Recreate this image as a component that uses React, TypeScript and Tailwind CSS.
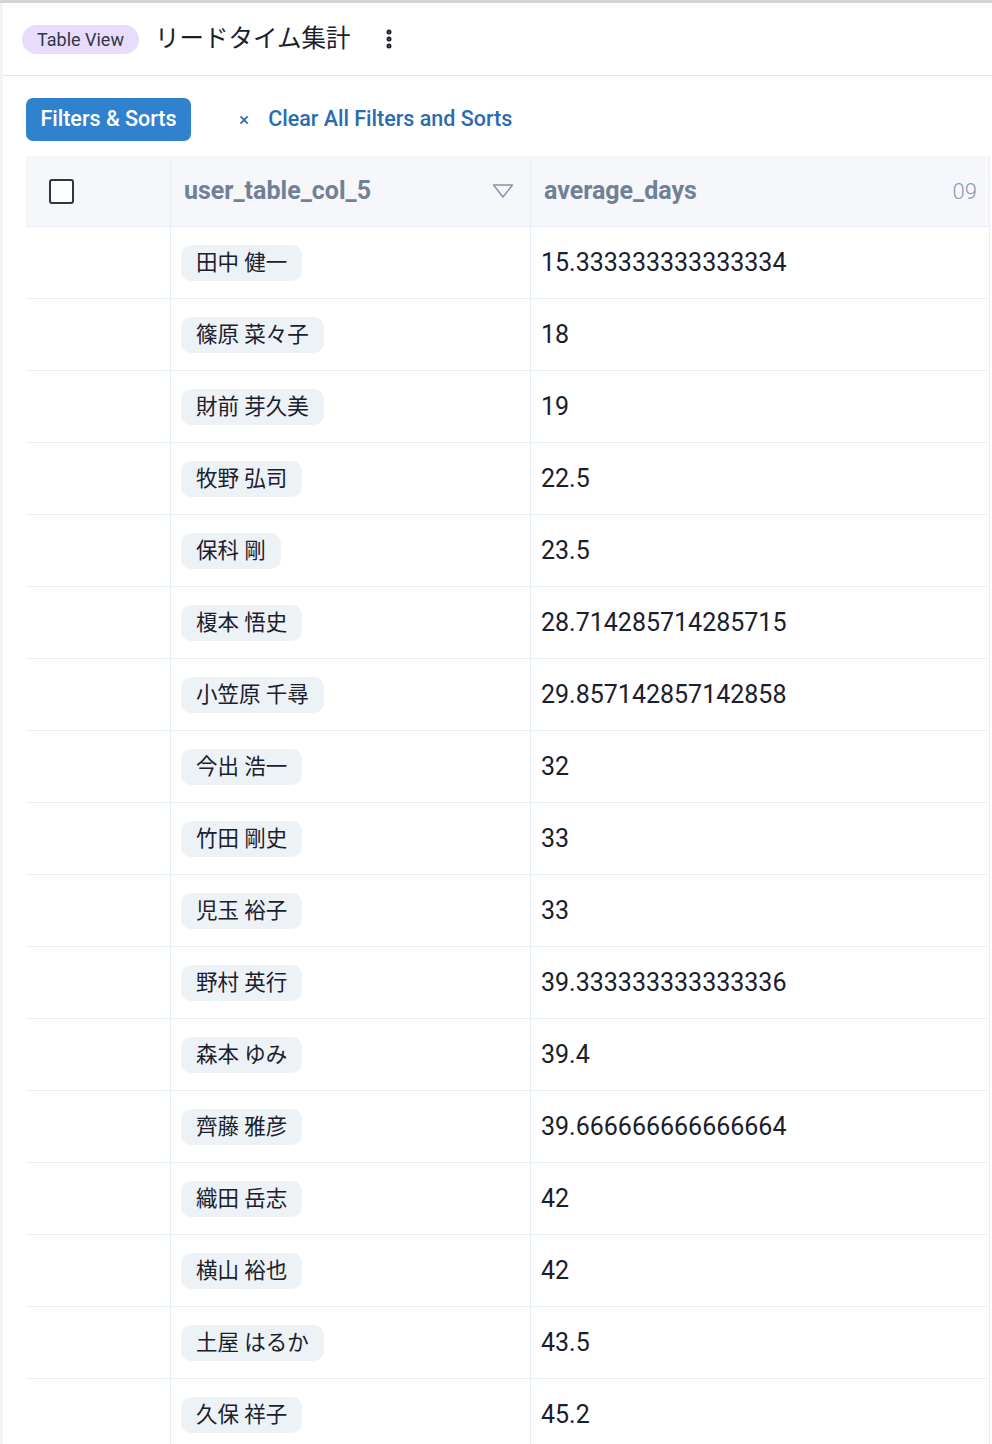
import { MoreVertical } from "lucide-react";

// Lead-time summary table view
const rows: { name: string; days: string }[] = [
  { name: "田中 健一", days: "15.333333333333334" },
  { name: "篠原 菜々子", days: "18" },
  { name: "財前 芽久美", days: "19" },
  { name: "牧野 弘司", days: "22.5" },
  { name: "保科 剛", days: "23.5" },
  { name: "榎本 悟史", days: "28.714285714285715" },
  { name: "小笠原 千尋", days: "29.857142857142858" },
  { name: "今出 浩一", days: "32" },
  { name: "竹田 剛史", days: "33" },
  { name: "児玉 裕子", days: "33" },
  { name: "野村 英行", days: "39.333333333333336" },
  { name: "森本 ゆみ", days: "39.4" },
  { name: "齊藤 雅彦", days: "39.666666666666664" },
  { name: "織田 岳志", days: "42" },
  { name: "横山 裕也", days: "42" },
  { name: "土屋 はるか", days: "43.5" },
  { name: "久保 祥子", days: "45.2" },
];

const font = { fontFamily: 'Roboto, "Noto Sans CJK JP", sans-serif' };

export default function App() {
  return (
    <div
      className="h-[1444px] overflow-hidden bg-white border-t-[3px] border-[#d4d4d4] flex"
      style={font}
    >
      {/* left strip */}
      <div className="w-[3px] shrink-0 bg-[#f2f4f8]" />

      <div className="flex-1 flex flex-col min-w-0">
        {/* Header */}
        <div className="h-[73px] shrink-0 flex items-center pl-[19px] border-b border-[#e6e8ef]">
          <span className="h-[29px] px-[15px] rounded-full bg-[#e9dcfb] text-[#2d3748] text-[18px] leading-[29px]">
            Table View
          </span>
          <span className="ml-[16px] text-[24.5px] text-[#1a202c] leading-none">
            リードタイム集計
          </span>
          <MoreVertical className="ml-[27px] w-[24px] h-[24px] text-[#1a202c]" strokeWidth={3} />
        </div>

        {/* Toolbar */}
        <div className="flex items-center pl-[23px] pt-[22px] pb-[15px]">
          <button className="h-[43px] w-[165px] rounded-[7px] bg-[#3182ce] text-white text-[21.5px] font-medium">
            Filters &amp; Sorts
          </button>
          <span className="ml-[48px] text-[#2b6cb0] text-[19px] leading-none">×</span>
          <span className="ml-[19px] text-[#2b6cb0] text-[21.5px] font-medium">
            Clear All Filters and Sorts
          </span>
        </div>

        {/* Table */}
        <div className="ml-[23px] mr-[2px] border-r border-[#e8eef5]">
          <div className="h-[71px] flex bg-[#f5f7fa] border-b border-[#e8eef5]">
            <div className="w-[144px] shrink-0 flex items-center pl-[23px]">
              <div className="w-[25px] h-[25px] rounded-[3px] border-2 border-[#2d3748] bg-white" />
            </div>
            <div className="w-[360px] shrink-0 flex items-center justify-between pl-[13px] pr-[16px] border-l border-[#e8eef5]">
              <span className="text-[25px] font-bold text-[#718096]">user_table_col_5</span>
              <svg width="22" height="16" viewBox="0 0 22 16" fill="none">
                <path d="M1.5 2h19L11 14z" stroke="#8794a8" strokeWidth="1.5" strokeLinejoin="round" />
              </svg>
            </div>
            <div className="flex-1 flex items-center justify-between pl-[13px] pr-[12px] border-l border-[#e8eef5]">
              <span className="text-[25px] font-bold text-[#718096]">average_days</span>
              <span className="text-[22px] font-light text-[#8a9ab5]">09</span>
            </div>
          </div>

          {rows.map((r, i) => (
            <div key={i} className="h-[72px] flex border-b border-[#e8eef5]">
              <div className="w-[144px] shrink-0" />
              <div className="w-[360px] shrink-0 flex items-center pl-[10px] border-l border-[#e8eef5]">
                <span className="h-[36px] px-[15px] rounded-[10px] bg-[#edf2f7] text-[21.5px] leading-[36px] text-[#1a202c]">
                  {r.name}
                </span>
              </div>
              <div className="flex-1 flex items-center pl-[10px] border-l border-[#e8eef5]">
                <span className="text-[25px] text-[#1a202c]">{r.days}</span>
              </div>
            </div>
          ))}
        </div>
      </div>
    </div>
  );
}
